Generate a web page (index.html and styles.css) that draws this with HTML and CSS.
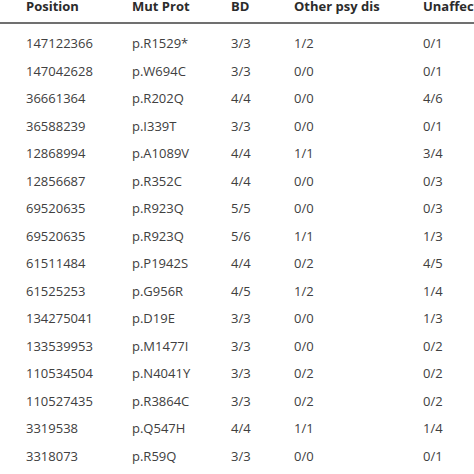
FILE: index.html
```html
<!DOCTYPE html>
<html>
<head>
<meta charset="utf-8">
<link rel="stylesheet" href="styles.css">
</head>
<body>
<div class="table">
  <div class="row head">
    <div>Position</div><div>Mut Prot</div><div>BD</div><div>Other psy dis</div><div>Unaffected</div>
  </div>
  <div class="body">
    <div class="row"><div>147122366</div><div>p.R1529*</div><div>3/3</div><div>1/2</div><div>0/1</div></div>
    <div class="row"><div>147042628</div><div>p.W694C</div><div>3/3</div><div>0/0</div><div>0/1</div></div>
    <div class="row"><div>36661364</div><div>p.R202Q</div><div>4/4</div><div>0/0</div><div>4/6</div></div>
    <div class="row"><div>36588239</div><div>p.I339T</div><div>3/3</div><div>0/0</div><div>0/1</div></div>
    <div class="row"><div>12868994</div><div>p.A1089V</div><div>4/4</div><div>1/1</div><div>3/4</div></div>
    <div class="row"><div>12856687</div><div>p.R352C</div><div>4/4</div><div>0/0</div><div>0/3</div></div>
    <div class="row"><div>69520635</div><div>p.R923Q</div><div>5/5</div><div>0/0</div><div>0/3</div></div>
    <div class="row"><div>69520635</div><div>p.R923Q</div><div>5/6</div><div>1/1</div><div>1/3</div></div>
    <div class="row"><div>61511484</div><div>p.P1942S</div><div>4/4</div><div>0/2</div><div>4/5</div></div>
    <div class="row"><div>61525253</div><div>p.G956R</div><div>4/5</div><div>1/2</div><div>1/4</div></div>
    <div class="row"><div>134275041</div><div>p.D19E</div><div>3/3</div><div>0/0</div><div>1/3</div></div>
    <div class="row"><div>133539953</div><div>p.M1477I</div><div>3/3</div><div>0/0</div><div>0/2</div></div>
    <div class="row"><div>110534504</div><div>p.N4041Y</div><div>3/3</div><div>0/2</div><div>0/2</div></div>
    <div class="row"><div>110527435</div><div>p.R3864C</div><div>3/3</div><div>0/2</div><div>0/2</div></div>
    <div class="row"><div>3319538</div><div>p.Q547H</div><div>4/4</div><div>1/1</div><div>1/4</div></div>
    <div class="row"><div>3318073</div><div>p.R59Q</div><div>3/3</div><div>0/0</div><div>0/1</div></div>
  </div>
</div>
</body>
</html>
```
FILE: styles.css
```css
html, body {
  margin: 0;
  padding: 0;
  background: #fff;
  overflow: hidden;
}
.table {
  width: 474px;
  height: 474px;
  overflow: hidden;
  font-family: "Open Sans", sans-serif;
  font-size: 13px;
  color: #404040;
}
.row {
  display: grid;
  grid-template-columns: 106px 99px 63px 129px 1fr;
  padding-left: 26px;
  white-space: nowrap;
}
.head {
  font-weight: 700;
  color: #2b2b2b;
  line-height: 13px;
  height: 22px;
  border-bottom: 2px solid #707070;
}
.body {
  padding-top: 6px;
}
.body .row {
  height: 27.5px;
  line-height: 27.5px;
}
```
